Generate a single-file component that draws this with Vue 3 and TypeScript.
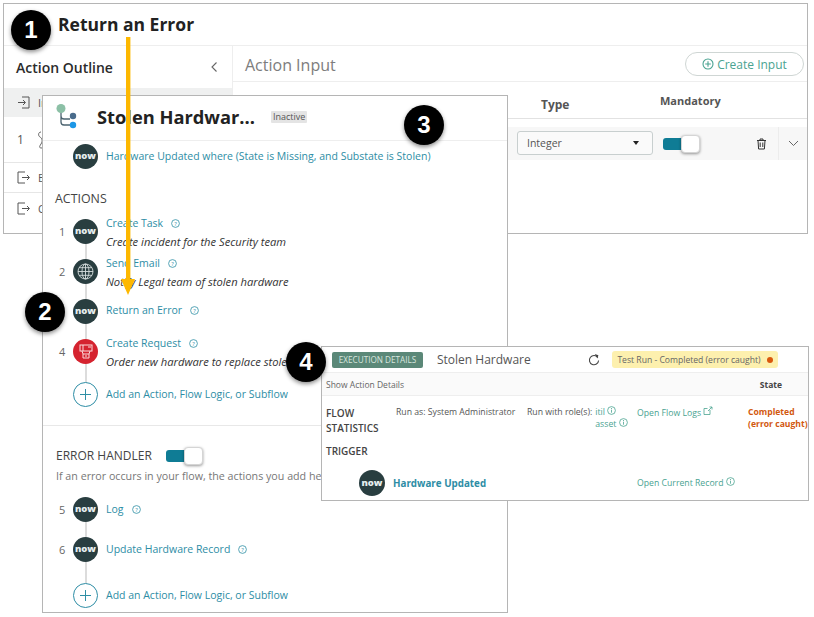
<script setup lang="ts">
interface Step {
  num: string
  name: string
  sub?: string
  kind: 'now' | 'globe' | 'red'
}
const actions: Step[] = [
  { num: '1', name: 'Create Task', sub: 'Create incident for the Security team', kind: 'now' },
  { num: '2', name: 'Send Email', sub: 'Notify Legal team of stolen hardware', kind: 'globe' },
  { num: '', name: 'Return an Error', kind: 'now' },
  { num: '4', name: 'Create Request', sub: 'Order new hardware to replace stolen', kind: 'red' }
]
const handlers: Step[] = [
  { num: '5', name: 'Log', kind: 'now' },
  { num: '6', name: 'Update Hardware Record', kind: 'now' }
]
const badges = [
  { n: '1', cls: 'b1' },
  { n: '2', cls: 'b2' },
  { n: '3', cls: 'b3' },
  { n: '4', cls: 'b4' }
]
</script>

<template>
  <div class="canvas">
    <!-- back window: action designer -->
    <section class="win win-action">
      <h1 class="act-title">Return an Error</h1>
      <div class="act-body">
        <aside class="outline">
          <div class="outline-head">
            <h2>Action Outline</h2>
            <svg width="8" height="12" viewBox="0 0 8 12"><path d="M6.500 1.500 2 6l4.500 4.500" fill="none" stroke="#666" stroke-width="1.100" /></svg>
          </div>
          <div class="o-row o-active">
            <svg class="o-ic" width="13" height="13" viewBox="0 0 13 13"><path d="M5 1h7v11H5M1 6.500h7M6 4l2.500 2.500L6 9" fill="none" stroke="#555" stroke-width="1" /></svg>
            <span>Inputs</span>
          </div>
          <div class="o-row o-step">
            <span class="o-num">1</span>
            <svg width="8" height="18" viewBox="0 0 8 18"><path d="M4 1C1 1 1 5 3 6s3 4 1 7-2 4 1 4" fill="none" stroke="#666" stroke-width="1" /></svg>
          </div>
          <div class="o-row o-line">
            <svg class="o-ic" width="13" height="13" viewBox="0 0 13 13"><path d="M8 1H1v11h7M5 6.500h7M10 4l2.500 2.500L10 9" fill="none" stroke="#555" stroke-width="1" /></svg>
            <span>Error Evaluation</span>
          </div>
          <div class="o-row o-line">
            <svg class="o-ic" width="13" height="13" viewBox="0 0 13 13"><path d="M8 1H1v11h7M5 6.500h7M10 4l2.500 2.500L10 9" fill="none" stroke="#555" stroke-width="1" /></svg>
            <span>Outputs</span>
          </div>
        </aside>
        <div class="inputs">
          <div class="inputs-head">
            <h2>Action Input</h2>
            <button class="create-btn">
              <svg width="12" height="12" viewBox="0 0 12 12"><circle cx="6" cy="6" r="5" fill="none" stroke="#4aa391" stroke-width="1.100" /><path d="M6 3.200v5.600M3.200 6h5.600" stroke="#4aa391" stroke-width="1.100" /></svg>
              Create Input
            </button>
          </div>
          <div class="table-head">
            <span class="th-type">Type</span>
            <span class="th-mand">Mandatory</span>
          </div>
          <div class="table-row">
            <div class="select">
              <span>Integer</span>
              <i class="caret"></i>
            </div>
            <div class="toggle"><i class="knob"></i></div>
            <svg class="trash" width="11" height="12" viewBox="0 0 11 12"><path d="M1 2.500h9M4 2.500V1h3v1.500M2 2.500l.6 8.500h5.800L9 2.500M4.200 4.500v4.500M6.800 4.500v4.500" fill="none" stroke="#333" stroke-width="1" /></svg>
            <div class="expander">
              <svg width="11" height="7" viewBox="0 0 11 7"><path d="M1 1l4.500 4.500L10 1" fill="none" stroke="#666" stroke-width="1" /></svg>
            </div>
          </div>
        </div>
      </div>
    </section>

    <!-- middle window: flow -->
    <section class="win win-flow">
      <header class="flow-head">
        <svg class="flow-logo" width="26" height="28" viewBox="0 0 26 28">
          <path d="M5 8v11q0 3 3 3h6M5 13q0 3 3 3h6" fill="none" stroke="#4c6470" stroke-width="1.300" />
          <circle cx="5" cy="5.500" r="4.500" fill="#8cc0a6" />
          <circle cx="17" cy="13" r="3.200" fill="#4a6c8c" />
          <circle cx="17" cy="22" r="3.200" fill="#1d97e6" />
        </svg>
        <h2>Stolen Hardwar...</h2>
        <span class="inactive">Inactive</span>
      </header>
      <div class="trigger">
        <span class="now"><b>now</b></span>
        <a>Hardware Updated where (State is Missing, and Substate is Stolen)</a>
      </div>
      <h3 class="sec">ACTIONS</h3>
      <ul class="steps">
        <li v-for="s in actions" :key="s.name" class="step">
          <span class="num">{{ s.num }}</span>
          <span v-if="s.kind === 'now'" class="now"><b>now</b></span>
          <span v-else-if="s.kind === 'globe'" class="now">
            <svg width="17" height="17" viewBox="0 0 17 17" fill="none" stroke="#d5dcdc" stroke-width=".9"><circle cx="8.500" cy="8.500" r="7.500" /><ellipse cx="8.500" cy="8.500" rx="3.500" ry="7.500" /><path d="M8.500 1v15M1 8.500h15M2 4.700h13M2 12.300h13" /></svg>
          </span>
          <span v-else class="now red">
            <svg width="14" height="15" viewBox="0 0 14 15" fill="none" stroke="#fbdcdc" stroke-width="1"><rect x="1" y="1" width="12" height="6" /><path d="M4 1v6M9 3h3M3 7l1 3h6l1-3M4 10v4h6v-4M6 12h2" /></svg>
          </span>
          <div class="step-text" :class="s.sub ? 'two' : 'one'">
            <div class="step-name">
              <a>{{ s.name }}</a>
              <svg class="help" width="9" height="9" viewBox="0 0 9 9"><circle cx="4.500" cy="4.500" r="3.900" fill="none" stroke="#2f8fa5" stroke-width=".8" /><text x="4.500" y="6.600" text-anchor="middle" font-size="6" fill="#2f8fa5">?</text></svg>
            </div>
            <p v-if="s.sub">{{ s.sub }}</p>
          </div>
        </li>
        <li class="step add">
          <span class="num"></span>
          <span class="plus">
            <svg width="11" height="11" viewBox="0 0 11 11"><path d="M5.500 0v11M0 5.500h11" stroke="#2f8fa5" stroke-width="1" /></svg>
          </span>
          <a>Add an Action, Flow Logic, or Subflow</a>
        </li>
      </ul>
      <div class="handler">
        <div class="handler-title">
          <h3>ERROR HANDLER</h3>
          <div class="toggle"><i class="knob"></i></div>
        </div>
        <p class="handler-desc">If an error occurs in your flow, the actions you add here</p>
        <ul class="steps">
          <li v-for="s in handlers" :key="s.name" class="step">
            <span class="num">{{ s.num }}</span>
            <span class="now"><b>now</b></span>
            <div class="step-text">
              <div class="step-name">
                <a>{{ s.name }}</a>
                <svg class="help" width="9" height="9" viewBox="0 0 9 9"><circle cx="4.500" cy="4.500" r="3.900" fill="none" stroke="#2f8fa5" stroke-width=".8" /><text x="4.500" y="6.600" text-anchor="middle" font-size="6" fill="#2f8fa5">?</text></svg>
              </div>
            </div>
          </li>
          <li class="step add last">
            <span class="num"></span>
            <span class="plus">
              <svg width="11" height="11" viewBox="0 0 11 11"><path d="M5.500 0v11M0 5.500h11" stroke="#2f8fa5" stroke-width="1" /></svg>
            </span>
            <a>Add an Action, Flow Logic, or Subflow</a>
          </li>
        </ul>
      </div>
    </section>

    <!-- front window: execution details -->
    <section class="win win-exec">
      <header class="exec-head">
        <span class="exec-tag">EXECUTION DETAILS</span>
        <span class="exec-title">Stolen Hardware</span>
        <svg class="refresh" width="12" height="12" viewBox="0 0 12 12"><path d="M9.800 3.500A4.600 4.600 0 1 0 10.600 6.500" fill="none" stroke="#444" stroke-width="1.100" /><path d="M6.800 0l3.600 1.200-1 3.400z" fill="#444" /></svg>
        <span class="exec-status">Test Run - Completed (error caught)<i></i></span>
      </header>
      <div class="exec-sub">
        <span>Show Action Details</span>
        <b>State</b>
      </div>
      <div class="exec-grid">
        <div class="lbl">FLOW<br />STATISTICS</div>
        <div>Run as: System Administrator</div>
        <div class="roles">
          <span>Run with role(s):</span>
          <span class="role-list">
            <a>itil <svg width="9" height="9" viewBox="0 0 9 9"><circle cx="4.500" cy="4.500" r="3.900" fill="none" stroke="#4aa391" stroke-width=".8" /><path d="M4.500 3.700v3M4.500 2v1" stroke="#4aa391" stroke-width=".8" /></svg></a>
            <a>asset <svg width="9" height="9" viewBox="0 0 9 9"><circle cx="4.500" cy="4.500" r="3.900" fill="none" stroke="#4aa391" stroke-width=".8" /><path d="M4.500 3.700v3M4.500 2v1" stroke="#4aa391" stroke-width=".8" /></svg></a>
          </span>
        </div>
        <a class="green">Open Flow Logs <svg width="10" height="10" viewBox="0 0 10 10"><path d="M7 4v4.500H1v-6h3.500M5 5l4-4M6.500 1H9v2.500" fill="none" stroke="#4aa391" stroke-width=".8" /></svg></a>
        <b class="state">Completed<br />(error caught)</b>
      </div>
      <div class="lbl trig">TRIGGER</div>
      <div class="exec-trigger">
        <span class="now big"><b>now</b></span>
        <a class="hw">Hardware Updated</a>
        <a class="green cur">Open Current Record <svg width="9" height="9" viewBox="0 0 9 9"><circle cx="4.500" cy="4.500" r="3.900" fill="none" stroke="#4aa391" stroke-width=".8" /><path d="M4.500 3.700v3M4.500 2v1" stroke="#4aa391" stroke-width=".8" /></svg></a>
      </div>
    </section>

    <!-- annotations -->
    <svg class="arrow" width="14" height="260" viewBox="0 0 14 260">
      <path d="M5 0h4.400v242H14L7 258 0 242h5z" fill="#fdb800" />
    </svg>
    <span v-for="b in badges" :key="b.n" class="badge" :class="b.cls">{{ b.n }}</span>
  </div>
</template>

<style>
html, body { margin: 0; background: #fff; }
</style>

<style scoped>
* { box-sizing: border-box; }
.canvas {
  position: relative;
  width: 814px;
  height: 617px;
  overflow: hidden;
  background: #fff;
  font-family: "Open Sans", "Liberation Sans", sans-serif;
  color: #444;
}
h1, h2, h3, p, ul { margin: 0; padding: 0; }
ul { list-style: none; }
.win { position: absolute; background: #fff; border: 1px solid #b5b5b5; }

/* action window */
.win-action { left: 3px; top: 3px; width: 805px; height: 231px; display: flex; flex-direction: column; }
.act-title { height: 42px; padding-left: 54px; font-size: 17.500px; font-weight: 700; line-height: 41px; color: #222; border-bottom: 1px solid #eee; }
.act-body { display: flex; flex: 1; min-height: 0; }
.outline { width: 229px; border-right: 1px solid #eee; display: flex; flex-direction: column; }
.outline-head { height: 42px; padding: 0 14px 0 12px; display: flex; align-items: center; justify-content: space-between; }
.outline-head h2 { font-size: 14px; font-weight: 600; color: #2b2b2b; }
.o-row { display: flex; align-items: center; gap: 8px; padding-left: 13px; font-size: 11px; color: #555; }
.o-active { height: 29px; background: #eff0f0; }
.o-step { height: 46px; border-bottom: 1px solid #e6e6e6; gap: 13px; font-size: 12px; }
.o-line { height: 30px; border-bottom: 1px solid #e6e6e6; }
.o-line:last-child { border-bottom: 0; }
.inputs { flex: 1; display: flex; flex-direction: column; }
.inputs-head { height: 36px; padding: 6px 3px 0 12px; display: flex; align-items: flex-start; justify-content: space-between; border-bottom: 1px solid #eee; }
.inputs-head h2 { font-size: 16px; font-weight: 400; line-height: 26px; color: #7d7d7d; }
.create-btn { width: 119px; height: 24px; border: 1px solid #cfd6d4; border-radius: 12px; background: #fff; color: #4aa391; font: 400 12px "Open Sans", sans-serif; display: flex; align-items: center; justify-content: center; gap: 3px; padding: 0; }
.table-head { height: 37px; position: relative; border-bottom: 1px solid #e2e2e2; font-size: 12px; font-weight: 700; color: #555; }
.th-type { position: absolute; left: 308px; top: 14px; }
.th-mand { position: absolute; left: 427px; top: 11px; font-size: 11px; }
.table-row { margin-top: 8px; height: 33px; background: #f7f7f7; display: flex; align-items: center; padding-left: 284px; }
.select { width: 136px; height: 24px; margin-top: -2px; border: 1px solid #c8cfcf; border-radius: 3px; background: #fafafa; display: flex; align-items: center; justify-content: space-between; padding: 0 13px 0 9px; font-size: 10.500px; color: #555; }
.caret { width: 0; height: 0; border: 3px solid transparent; border-top: 4px solid #222; margin-top: 4px; }
.table-row .toggle { margin-left: 10px; }
.trash { margin-left: 56px; }
.expander { margin-left: 11px; height: 33px; border-left: 1px solid #ececec; padding-left: 9px; display: flex; align-items: center; }
.toggle { position: relative; width: 37px; height: 18px; display: block; flex: none; }
.toggle::before { content: ""; position: absolute; left: 0; top: 3px; width: 25px; height: 12px; background: #0f7c95; border-radius: 3px; }
.knob { position: absolute; right: 0; top: 0; width: 19px; height: 18px; background: #fff; border: 1px solid #d5d5d5; border-radius: 4px; box-shadow: 0 1px 3px rgba(0,0,0,.4); }

/* flow window */
.win-flow { left: 42px; top: 95px; width: 466px; height: 518px; display: flex; flex-direction: column; }
.win-flow > * { flex: none; }
.flow-head { height: 45px; display: flex; align-items: center; border-bottom: 1px solid #eee; padding: 0 0 4px 13px; }
.flow-logo { margin-right: 15px; margin-top: 2px; }
.flow-head h2 { font-size: 18.300px; font-weight: 700; color: #222; width: 174px; white-space: nowrap; }
.inactive { background: #e4e4e4; color: #555; font-size: 9px; line-height: 12px; padding: 0 2px; border-radius: 1px; margin-top: 1px; }
.now { width: 25px; height: 25px; border-radius: 50%; background: #293e40; flex: none; display: inline-flex; align-items: center; justify-content: center; position: relative; z-index: 1; }
.now b { font-size: 9.500px; font-weight: 800; color: #e6eeee; line-height: 1; }
.now.red { background: #d5232f; }
.now.big { width: 26px; height: 26px; }
.trigger { display: flex; align-items: center; gap: 8px; padding-left: 30px; height: 30px; }
a { color: #2d8da5; }
.trigger a { font-size: 10.500px; white-space: nowrap; }
.sec { padding-left: 12px; margin-top: 19px; font-size: 12.400px; font-weight: 400; color: #444; line-height: 17px; }
.win-flow > .steps { margin-top: 4px; }
.steps { padding-left: 14px; position: relative; }
.step { display: flex; align-items: center; height: 40px; position: relative; }
.step::before { content: ""; position: absolute; left: 28px; top: 20px; width: 2px; height: 40px; background: #dcdcdc; }
.step.add::before { display: none; }
.num { width: 16px; padding-left: 2px; font-size: 11px; color: #666; flex: none; }
.step-text { margin-left: 8px; }
.step-text.two { padding-top: 2px; }
.step-text.one { margin-top: -2px; }
.step-name { display: flex; align-items: center; gap: 8px; font-size: 10.500px; line-height: 19px; height: 19px; }
.help { flex: none; }
.step-text p { font-size: 11.200px; font-style: italic; color: #333; line-height: 18px; white-space: nowrap; }
.plus { width: 25px; height: 25px; flex: none; border: 1px solid #2d8da5; border-radius: 50%; background: #fff; display: inline-flex; align-items: center; justify-content: center; position: relative; z-index: 1; }
.add { margin-top: 3px; }
.add a { font-size: 10.500px; margin-left: 8px; white-space: nowrap; }
.handler { margin-top: 11px; border-top: 1px solid #e8e8e8; padding-top: 21px; }
.handler-title { display: flex; align-items: center; padding-left: 13px; }
.handler-title h3 { width: 110px; font-size: 12px; font-weight: 400; color: #444; line-height: 18px; }
.handler-desc { padding-left: 13px; margin-top: 1px; font-size: 10.700px; color: #777; line-height: 20px; white-space: nowrap; }
.handler .steps { margin-top: 3px; }
.add.last { margin-top: 6px; }

/* execution window */
.win-exec { left: 321px; top: 346px; width: 488px; height: 155px; display: flex; flex-direction: column; font-size: 8.700px; color: #555; }
.exec-head { height: 26px; display: flex; align-items: center; padding-left: 10px; border-bottom: 1px solid #eee; }
.exec-tag { width: 91px; height: 16px; background: #5b8878; color: #d8e6df; font-size: 8.200px; line-height: 16px; text-align: center; border-radius: 2px; }
.exec-title { font-size: 12px; margin-left: 14px; width: 151px; color: #555; }
.refresh { flex: none; }
.exec-status { margin-left: 12px; width: 166px; height: 17px; background: #fdf0ae; border-radius: 3px; font-size: 8.600px; display: flex; align-items: center; justify-content: center; gap: 6px; color: #666; white-space: nowrap; }
.exec-status i { width: 6px; height: 6px; background: #d9580d; border-radius: 50%; }
.exec-sub { height: 23px; display: flex; align-items: center; justify-content: space-between; padding: 0 26px 0 4px; background: #fafafa; border-bottom: 1px solid #eee; font-size: 8.500px; color: #666; }
.exec-sub b { color: #444; }
.exec-grid { display: grid; grid-template-columns: 70px 131px 110px 111px 1fr; padding: 10px 0 0 4px; line-height: 13px; }
.lbl { font-size: 10px; font-weight: 600; line-height: 15px; color: #444; }
.roles { display: flex; gap: 3px; white-space: nowrap; }
.role-list { display: flex; flex-direction: column; }
.role-list a, .green { color: #4aa391; }
.role-list a { line-height: 12px; }
.state { color: #d2590f; font-size: 8.600px; line-height: 12px; white-space: nowrap; }
.trig { padding-left: 4px; margin-top: 8px; }
.exec-trigger { display: flex; align-items: center; padding-left: 37px; margin-top: 11px; }
.hw { font-size: 9.800px; font-weight: 700; margin-left: 8px; width: 244px; color: #2d8da5; }
.cur { white-space: nowrap; }

/* annotations */
.arrow { position: absolute; left: 121px; top: 37px; }
.badge { position: absolute; width: 40px; height: 40px; border-radius: 50%; background: #000; color: #fff; font: 700 24px/40px "Liberation Sans", sans-serif; text-align: center; box-shadow: 0 2px 4px rgba(0,0,0,.45); }
.b1 { left: 11px; top: 10px; }
.b2 { left: 25px; top: 292px; }
.b3 { left: 404px; top: 105px; }
.b4 { left: 286px; top: 342px; }
</style>
